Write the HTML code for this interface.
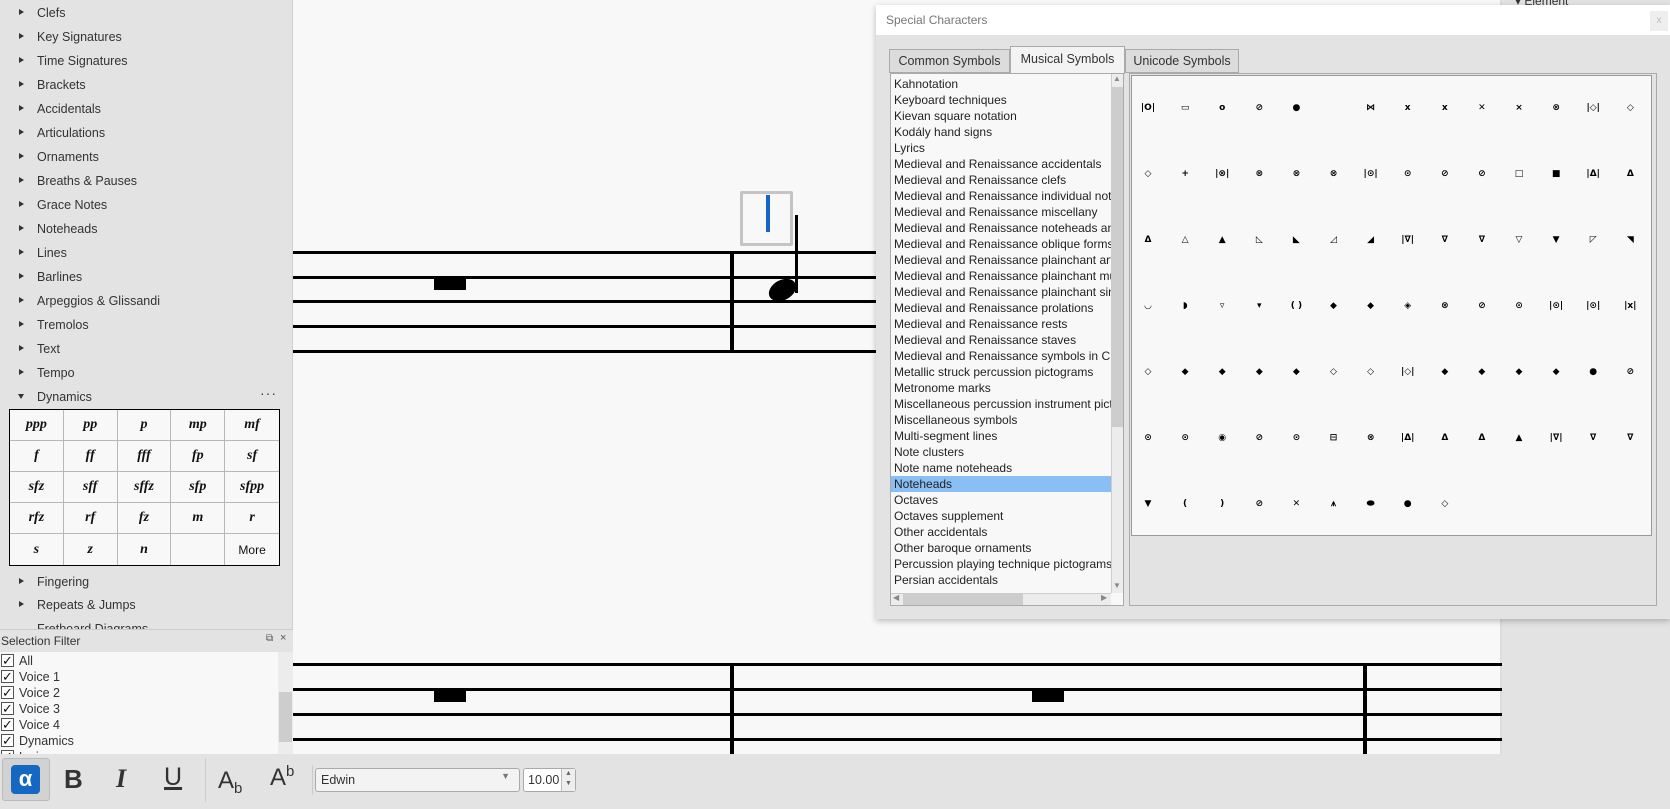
<!DOCTYPE html>
<html><head><meta charset="utf-8"><style>
*{margin:0;padding:0;box-sizing:border-box}
body{width:1670px;height:809px;overflow:hidden;background:#e3e3e3;font-family:"Liberation Sans","DejaVu Sans",sans-serif;position:relative;color:#333}
.abs{position:absolute}
.pi{position:absolute;left:37px;font-size:12.5px;color:#333;line-height:16px}
.tri{position:absolute;left:19px;width:0;height:0;border-top:3.5px solid transparent;border-bottom:3.5px solid transparent;border-left:5px solid #333}
.dyn{position:absolute;left:9px;top:409px;width:271px;height:157px;border:1.5px solid #000;background:#f8f8f8;display:grid;grid-template-columns:repeat(5,1fr);grid-template-rows:repeat(5,1fr)}
.dyn div{border-right:1px solid #b8b8b8;border-bottom:1.5px solid #b8b8b8;display:flex;align-items:center;justify-content:center;font-family:"Liberation Serif",serif;font-style:italic;font-weight:bold;font-size:14px;color:#111}
.dyn div:nth-child(5n){border-right:none}
.dyn div:nth-child(n+21){border-bottom:none}
.staff{position:absolute;height:3px;background:#000}
.li{position:absolute;left:3px;font-size:12px;line-height:16px;color:#222;white-space:nowrap}
.sym{position:absolute;width:20px;margin-left:-10px;text-align:center;font-size:9px;font-weight:bold;color:#000;line-height:10px;font-family:"DejaVu Sans",sans-serif}
.cb{position:absolute;left:1px;width:13px;height:13px;border:1px solid #555;background:#fff;font-size:13px;line-height:11px;text-align:center;font-weight:bold;color:#111}
.sf{position:absolute;left:19px;font-size:12.5px;color:#333}
</style></head><body>
<div class="abs" style="left:0;top:0;width:293px;height:634px;background:#e3e3e3;border-right:1px solid #cfcfcf"></div>
<div class="tri" style="top:9px"></div><div class="pi" style="top:5px">Clefs</div>
<div class="tri" style="top:33px"></div><div class="pi" style="top:29px">Key Signatures</div>
<div class="tri" style="top:57px"></div><div class="pi" style="top:53px">Time Signatures</div>
<div class="tri" style="top:81px"></div><div class="pi" style="top:77px">Brackets</div>
<div class="tri" style="top:105px"></div><div class="pi" style="top:101px">Accidentals</div>
<div class="tri" style="top:129px"></div><div class="pi" style="top:125px">Articulations</div>
<div class="tri" style="top:153px"></div><div class="pi" style="top:149px">Ornaments</div>
<div class="tri" style="top:177px"></div><div class="pi" style="top:173px">Breaths &amp; Pauses</div>
<div class="tri" style="top:201px"></div><div class="pi" style="top:197px">Grace Notes</div>
<div class="tri" style="top:225px"></div><div class="pi" style="top:221px">Noteheads</div>
<div class="tri" style="top:249px"></div><div class="pi" style="top:245px">Lines</div>
<div class="tri" style="top:273px"></div><div class="pi" style="top:269px">Barlines</div>
<div class="tri" style="top:297px"></div><div class="pi" style="top:293px">Arpeggios &amp; Glissandi</div>
<div class="tri" style="top:321px"></div><div class="pi" style="top:317px">Tremolos</div>
<div class="tri" style="top:345px"></div><div class="pi" style="top:341px">Text</div>
<div class="tri" style="top:369px"></div><div class="pi" style="top:365px">Tempo</div>
<div class="abs" style="left:18px;top:394px;border-left:3.5px solid transparent;border-right:3.5px solid transparent;border-top:5px solid #333"></div><div class="pi" style="top:389px">Dynamics</div>
<div class="abs" style="left:260px;top:385px;font-size:14px;letter-spacing:1px">···</div>
<div class="dyn">
<div>ppp</div><div>pp</div><div>p</div><div>mp</div><div>mf</div>
<div>f</div><div>ff</div><div>fff</div><div>fp</div><div>sf</div>
<div>sfz</div><div>sff</div><div>sffz</div><div>sfp</div><div>sfpp</div>
<div>rfz</div><div>rf</div><div>fz</div><div>m</div><div>r</div>
<div>s</div><div>z</div><div>n</div><div></div><div style="font-family:'Liberation Sans',sans-serif;font-style:normal;font-weight:normal;font-size:12px">More</div>
</div>
<div class="tri" style="top:578px"></div><div class="pi" style="top:574px">Fingering</div>
<div class="tri" style="top:601px"></div><div class="pi" style="top:597px">Repeats &amp; Jumps</div>
<div class="pi" style="top:621px">Fretboard Diagrams</div>
<div class="abs" style="left:0;top:629px;width:293px;height:125px;background:#e3e3e3;border-top:1px solid #ccc"></div>
<div class="abs" style="left:1px;top:634px;font-size:12px;color:#333">Selection Filter</div>
<div class="abs" style="left:266px;top:633px;font-size:10px;color:#555">⧉</div>
<div class="abs" style="left:280px;top:632px;font-size:11px;color:#555">×</div>
<div class="abs" style="left:0;top:652px;width:293px;height:102px;background:#f8f8f8;overflow:hidden">
<div class="cb" style="top:2px">✓</div><div class="sf" style="top:2px">All</div>
<div class="cb" style="top:18px">✓</div><div class="sf" style="top:18px">Voice 1</div>
<div class="cb" style="top:34px">✓</div><div class="sf" style="top:34px">Voice 2</div>
<div class="cb" style="top:50px">✓</div><div class="sf" style="top:50px">Voice 3</div>
<div class="cb" style="top:66px">✓</div><div class="sf" style="top:66px">Voice 4</div>
<div class="cb" style="top:82px">✓</div><div class="sf" style="top:82px">Dynamics</div>
<div class="cb" style="top:98px">✓</div><div class="sf" style="top:98px">Lyrics</div>
<div class="abs" style="left:278px;top:0;width:15px;height:102px;background:#ececec"></div>
<div class="abs" style="left:279px;top:40px;width:13px;height:50px;background:#cdcdcd"></div>
</div>
<div class="abs" style="left:293px;top:0;width:1209px;height:754px;background:#f8f8f8;border-right:2px solid #dcdcdc"></div>
<div class="staff" style="left:293px;width:600px;top:251px"></div>
<div class="staff" style="left:293px;width:600px;top:276px"></div>
<div class="staff" style="left:293px;width:600px;top:300px"></div>
<div class="staff" style="left:293px;width:600px;top:325px"></div>
<div class="staff" style="left:293px;width:600px;top:350px"></div>
<div class="abs" style="left:730px;top:252px;width:4px;height:100px;background:#000"></div>
<div class="abs" style="left:434px;top:277px;width:32px;height:13px;background:#000"></div>
<div class="abs" style="left:740px;top:191px;width:53px;height:55px;border:3px solid #c4c4c4;border-radius:2px"></div>
<div class="abs" style="left:766px;top:195px;width:4px;height:37px;background:#1466c8"></div>
<div class="abs" style="left:795px;top:215px;width:2.5px;height:78px;background:#000"></div>
<div class="abs" style="left:768px;top:280px;width:29px;height:20px;background:#000;border-radius:50%;transform:rotate(-28deg)"></div>
<div class="staff" style="left:293px;width:1209px;top:663px"></div>
<div class="staff" style="left:293px;width:1209px;top:688px"></div>
<div class="staff" style="left:293px;width:1209px;top:713px"></div>
<div class="staff" style="left:293px;width:1209px;top:738px"></div>
<div class="abs" style="left:730px;top:664px;width:4px;height:90px;background:#000"></div>
<div class="abs" style="left:1363px;top:664px;width:4px;height:90px;background:#000"></div>
<div class="abs" style="left:434px;top:689px;width:32px;height:13px;background:#000"></div>
<div class="abs" style="left:1032px;top:689px;width:32px;height:13px;background:#000"></div>
<div class="abs" style="left:1515px;top:-6px;font-size:12px;color:#333">▾ Element</div>
<div class="abs" style="left:0;top:754px;width:1670px;height:55px;background:#e3e3e3"></div>
<div class="abs" style="left:2px;top:758px;width:48px;height:43px;background:#d2d2d2;border:1px solid #bbb;border-radius:3px"></div>
<div class="abs" style="left:11px;top:765px;width:29px;height:29px;background:#1468c4;border-radius:4px;color:#fff;font-size:22px;font-weight:bold;text-align:center;line-height:27px">α</div>
<div class="abs" style="left:64px;top:764px;font-size:26px;font-weight:bold;color:#333">B</div>
<div class="abs" style="left:116px;top:764px;font-size:26px;font-weight:bold;font-style:italic;color:#333;font-family:'Liberation Serif',serif">I</div>
<div class="abs" style="left:164px;top:763px;font-size:25px;color:#333;text-decoration:underline;text-decoration-thickness:3px">U</div>
<div class="abs" style="left:205px;top:758px;width:1px;height:44px;background:#ccc"></div>
<div class="abs" style="left:218px;top:767px;font-size:24px;color:#333">A<span style="font-size:15px;position:relative;top:5px">b</span></div>
<div class="abs" style="left:270px;top:764px;font-size:24px;color:#333">A<span style="font-size:15px;position:relative;top:-9px">b</span></div>
<div class="abs" style="left:312px;top:765px;width:1px;height:30px;background:#ccc"></div>
<div class="abs" style="left:315px;top:768px;width:205px;height:24px;border:1px solid #aaa;border-radius:3px;background:#f3f3f3;font-size:12.5px;padding:4px 0 0 5px">Edwin<span style="position:absolute;right:9px;top:2px;font-size:9px;color:#777">▼</span></div>
<div class="abs" style="left:523px;top:768px;width:53px;height:24px;border:1px solid #aaa;border-radius:3px;background:#fff;font-size:12.5px;padding:4px 0 0 4px">10.00<span style="position:absolute;right:0;top:0;width:14px;height:22px;background:#eee;border-left:1px solid #bbb;font-size:7px;color:#666;line-height:10px;text-align:center">▲<br>▼</span></div>
<div class="abs" style="left:876px;top:5px;width:794px;height:614px;background:#e3e3e3;box-shadow:0 2px 6px rgba(0,0,0,.25)"></div>
<div class="abs" style="left:876px;top:5px;width:794px;height:30px;background:#fff"></div>
<div class="abs" style="left:886px;top:13px;font-size:12px;color:#777">Special Characters</div>
<div class="abs" style="left:1650px;top:11px;width:18px;height:20px;background:#eee;font-size:10px;color:#bbb;text-align:center;line-height:20px">x</div>
<div class="abs" style="left:889px;top:49px;width:121px;height:24px;background:#dcdcdc;border:1px solid #aaa;font-size:12.5px;text-align:center;line-height:22px">Common Symbols</div>
<div class="abs" style="left:1010px;top:46px;width:115px;height:28px;background:#f3f3f3;border:1px solid #aaa;border-bottom:none;font-size:12.5px;text-align:center;line-height:24px">Musical Symbols</div>
<div class="abs" style="left:1125px;top:49px;width:114px;height:24px;background:#dcdcdc;border:1px solid #aaa;font-size:12.5px;text-align:center;line-height:22px">Unicode Symbols</div>
<div class="abs" style="left:890px;top:73px;width:234px;height:533px;background:#f8f8f8;border:1px solid #aaa;overflow:hidden">
<div class="li" style="top:2px">Kahnotation</div>
<div class="li" style="top:18px">Keyboard techniques</div>
<div class="li" style="top:34px">Kievan square notation</div>
<div class="li" style="top:50px">Kodály hand signs</div>
<div class="li" style="top:66px">Lyrics</div>
<div class="li" style="top:82px">Medieval and Renaissance accidentals</div>
<div class="li" style="top:98px">Medieval and Renaissance clefs</div>
<div class="li" style="top:114px">Medieval and Renaissance individual notes</div>
<div class="li" style="top:130px">Medieval and Renaissance miscellany</div>
<div class="li" style="top:146px">Medieval and Renaissance noteheads and stems</div>
<div class="li" style="top:162px">Medieval and Renaissance oblique forms</div>
<div class="li" style="top:178px">Medieval and Renaissance plainchant articulations</div>
<div class="li" style="top:194px">Medieval and Renaissance plainchant multi</div>
<div class="li" style="top:210px">Medieval and Renaissance plainchant single</div>
<div class="li" style="top:226px">Medieval and Renaissance prolations</div>
<div class="li" style="top:242px">Medieval and Renaissance rests</div>
<div class="li" style="top:258px">Medieval and Renaissance staves</div>
<div class="li" style="top:274px">Medieval and Renaissance symbols in CMN</div>
<div class="li" style="top:290px">Metallic struck percussion pictograms</div>
<div class="li" style="top:306px">Metronome marks</div>
<div class="li" style="top:322px">Miscellaneous percussion instrument pictograms</div>
<div class="li" style="top:338px">Miscellaneous symbols</div>
<div class="li" style="top:354px">Multi-segment lines</div>
<div class="li" style="top:370px">Note clusters</div>
<div class="li" style="top:386px">Note name noteheads</div>
<div class="abs" style="left:0;top:402px;width:220px;height:16px;background:#8abff5"></div>
<div class="li" style="top:402px">Noteheads</div>
<div class="li" style="top:418px">Octaves</div>
<div class="li" style="top:434px">Octaves supplement</div>
<div class="li" style="top:450px">Other accidentals</div>
<div class="li" style="top:466px">Other baroque ornaments</div>
<div class="li" style="top:482px">Percussion playing technique pictograms</div>
<div class="li" style="top:498px">Persian accidentals</div>
<div class="abs" style="left:220px;top:0;width:13px;height:519px;background:#ececec;border-left:1px solid #ccc"></div>
<div class="abs" style="left:221px;top:13px;width:12px;height:340px;background:#cdcdcd"></div>
<div class="abs" style="left:222px;top:0;font-size:8px;color:#888">▲</div>
<div class="abs" style="left:222px;top:507px;font-size:8px;color:#888">▼</div>
<div class="abs" style="left:0;top:519px;width:220px;height:13px;background:#ececec;border-top:1px solid #ccc"></div>
<div class="abs" style="left:12px;top:520px;width:120px;height:12px;background:#cdcdcd"></div>
<div class="abs" style="left:2px;top:519px;font-size:8px;color:#888">◀</div>
<div class="abs" style="left:210px;top:519px;font-size:8px;color:#888">▶</div>
</div>
<div class="abs" style="left:1129px;top:73px;width:528px;height:533px;border:1px solid #aaa"></div>
<div class="abs" style="left:1131px;top:75px;width:521px;height:461px;background:#f8f8f8;border:1px solid #999"></div>
<div id="syms"></div>
<script>
var s=["|O|","▭","o","⊘","●","","⋈","ⅹ","ⅹ","✕","×","⊗","|◇|","◇",
"◇","+","|⊗|","⊗","⊗","⊗","|⊙|","⊙","⊘","⊘","□","■","|Δ|","Δ",
"Δ","△","▲","◺","◣","◿","◢","|∇|","∇","∇","▽","▼","◸","◥",
"◡","◗","▿","▾","( )","◆","◆","◈","⊗","⊘","⊙","|⊙|","|⊙|","|ⅹ|",
"◇","◆","◆","◆","◆","◇","◇","|◇|","◆","◆","◆","◆","●","⊘",
"⊙","⊙","◉","⊘","⊙","⊟","⊗","|Δ|","Δ","Δ","▲","|∇|","∇","∇",
"▼","(",")","⊘","✕","⩚","⬬","●","◇"];
var h="";
for(var i=0;i<s.length;i++){var c=i%14,r=Math.floor(i/14);
h+='<div class="sym" style="left:'+(1148+c*37.1)+'px;top:'+(103+r*66)+'px">'+s[i]+'</div>';}
document.getElementById("syms").innerHTML=h;
</script>
</body></html>
